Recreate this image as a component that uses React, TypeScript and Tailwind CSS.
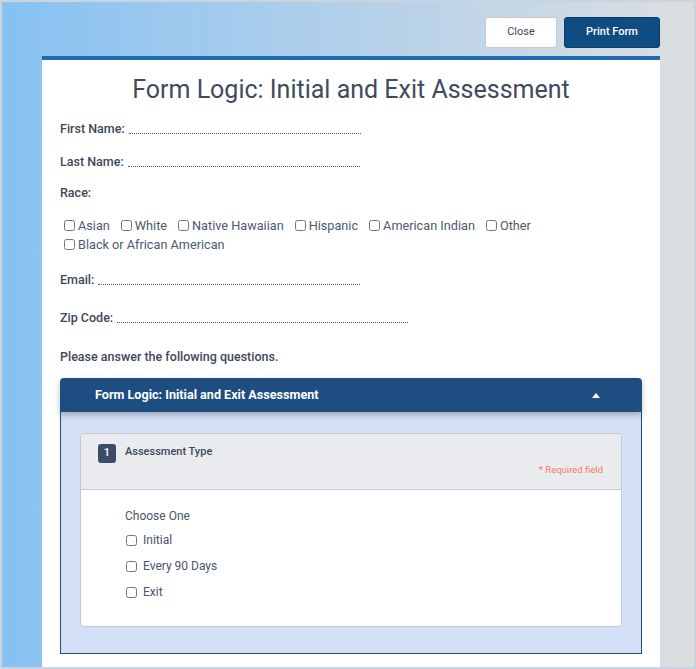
import React from "react";

const labelCls = "text-[12.5px] font-medium text-[#3c4858]";

const LineField = ({ label, width, mt }: { label: string; width: string; mt: string }) => (
  <div className={`${mt} h-[20px] leading-[20px] whitespace-nowrap`}>
    <span className={labelCls}>{label}</span>
    <span className={`ml-[4px] inline-block ${width} border-b border-dotted border-[#555] align-[-1px]`}></span>
  </div>
);

const Check = ({ label }: { label: string }) => (
  <label className="inline-flex items-center mr-[7px] text-[12.7px] text-[#4b5a6e] leading-[19px]">
    <input type="checkbox" className="ml-[4px] mr-[3px] my-[3px] w-[11px] h-[11px]" />
    {label}
  </label>
);

const races = [
  "Asian",
  "White",
  "Native Hawaiian",
  "Hispanic",
  "American Indian",
  "Other",
  "Black or African American",
];

const options = ["Initial", "Every 90 Days", "Exit"];

export default function App() {
  return (
    <div className="w-[696px] h-[669px] overflow-hidden border-2 border-[#c8d5e0] bg-linear-to-r from-[#86c1f2] to-[#dcdee0] font-['Roboto','Liberation_Sans',sans-serif] flex flex-col">
      {/* top buttons */}
      <div className="flex justify-end gap-[7px] pt-[15px] pr-[34px]">
        <button className="w-[72px] h-[31px] rounded-[3px] border border-[#c7cacd] bg-white text-[11px] text-[#3d4a5c]">
          Close
        </button>
        <button className="w-[96px] h-[31px] rounded-[3px] border border-[#0c3f6d] bg-[#0f4c81] text-[11px] font-medium text-white">
          Print Form
        </button>
      </div>

      {/* form card */}
      <div className="ml-[40px] mt-[8px] w-[618px] flex-1 border-t-4 border-[#1f6bb1] bg-white px-[18px]">
        <h1 className="pt-[14px] h-[45px] leading-[32px] text-center text-[25px] text-[#3e4b5e]">
          Form Logic: Initial and Exit Assessment
        </h1>

        <LineField label="First Name:" width="w-[232px]" mt="mt-[13px]" />
        <LineField label="Last Name:" width="w-[232px]" mt="mt-[13px]" />
        <div className={`mt-[12px] h-[20px] leading-[20px] ${labelCls}`}>Race:</div>

        <div className="mt-[13px] flex flex-wrap">
          {races.map((r) => (
            <Check key={r} label={r} />
          ))}
        </div>

        <LineField label="Email:" width="w-[262px]" mt="mt-[15px]" />
        <LineField label="Zip Code:" width="w-[291px]" mt="mt-[18px]" />

        <div className={`mt-[20px] h-[20px] leading-[20px] ${labelCls}`}>
          Please answer the following questions.
        </div>

        {/* accordion */}
        <div className="mt-[11px]">
          <div className="relative z-10 flex h-[34px] items-center justify-between rounded-t-[4px] bg-[#1e4d82] pl-[35px] pr-[42px] shadow-[0_3px_6px_rgba(0,0,0,0.25)]">
            <span className="text-[12.6px] font-bold text-white">
              Form Logic: Initial and Exit Assessment
            </span>
            <svg width="8" height="5" viewBox="0 0 8 5">
              <path d="M0 5 L4 0 L8 5 Z" fill="#fff" />
            </svg>
          </div>
          <div className="border-x border-b border-[#1e4d82] bg-[#d3e0f5] px-[19px] pt-[21px] pb-[26px]">
            <div className="overflow-hidden rounded-[4px] border border-[#c6cad0] bg-white">
              <div className="h-[56px] border-b border-[#c6cad0] bg-[#e9ebee] pl-[17px] pr-[18px] pt-[10px]">
                <div className="flex items-start">
                  <span className="flex h-[19px] w-[18px] items-center justify-center rounded-[3px] bg-[#3d4a68] text-[11px] font-medium text-white">
                    1
                  </span>
                  <span className="ml-[9px] mt-[1px] text-[11px] font-medium leading-[14px] text-[#3c4858]">
                    Assessment Type
                  </span>
                </div>
                <div className="mt-[1px] text-right text-[9.5px] leading-[12px] text-[#f47c5a]">
                  * Required field
                </div>
              </div>
              <div className="pl-[44px] pt-[18px] pb-[21px]">
                <div className="h-[16px] leading-[16px] text-[12px] text-[#4a5568]">Choose One</div>
                <div className="mt-[3px]">
                  {options.map((o) => (
                    <label key={o} className="flex h-[26px] items-center text-[12px] text-[#4a5568]">
                      <input type="checkbox" className="ml-[1px] mr-[6px] w-[11px] h-[11px]" />
                      {o}
                    </label>
                  ))}
                </div>
              </div>
            </div>
          </div>
        </div>
      </div>
    </div>
  );
}
